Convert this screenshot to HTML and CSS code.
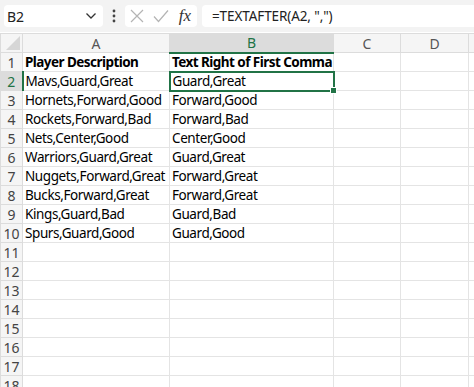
FILE: index.html
```html
<!DOCTYPE html>
<html lang="en">
<head>
  <meta charset="UTF-8" />
  <title>TEXTAFTER</title>
  <link rel="stylesheet" href="styles.css">
</head>
<body>
  <div class="toolbar">
    <div class="name-box">
      <span>B2</span>
      <svg class="chevron" width="12" height="8" viewBox="0 0 12 8"><path d="M1.5 1.5 L6 6 L10.5 1.5" fill="none" stroke="#333" stroke-width="1.3"/></svg>
    </div>
    <div class="grip">
      <svg width="4" height="14" viewBox="0 0 4 14"><circle cx="2" cy="2" r="1.4" fill="#444"/><circle cx="2" cy="7" r="1.4" fill="#444"/><circle cx="2" cy="12" r="1.4" fill="#444"/></svg>
    </div>
    <div class="fx-box">
      <svg width="14" height="14" viewBox="0 0 14 14"><path d="M1 1 L13 13 M13 1 L1 13" stroke="#b4b4b4" stroke-width="1.2"/></svg>
      <svg width="16" height="14" viewBox="0 0 16 14"><path d="M1 7.5 L5.5 12.5 L15 1.5" fill="none" stroke="#b4b4b4" stroke-width="1.2"/></svg>
      <span class="fx">fx</span>
    </div>
    <div class="formula">=TEXTAFTER(A2, ",")</div>
  </div>

  <table class="sheet">
    <colgroup>
      <col class="c-row"><col class="c-a"><col class="c-b"><col class="c-c"><col class="c-d"><col>
    </colgroup>
    <tr class="heads">
      <th class="corner"><span class="tri"></span></th>
      <th>A</th><th class="sel-col">B</th><th>C</th><th>D</th><th></th>
    </tr>
    <tr><th>1</th><td class="bold">Player Description</td><td class="bold">Text Right of First Comma</td><td></td><td></td><td></td></tr>
    <tr><th class="sel-row">2</th><td>Mavs,Guard,Great</td><td class="active">Guard,Great<span class="handle"></span></td><td></td><td></td><td></td></tr>
    <tr><th>3</th><td>Hornets,Forward,Good</td><td>Forward,Good</td><td></td><td></td><td></td></tr>
    <tr><th>4</th><td>Rockets,Forward,Bad</td><td>Forward,Bad</td><td></td><td></td><td></td></tr>
    <tr><th>5</th><td>Nets,Center,Good</td><td>Center,Good</td><td></td><td></td><td></td></tr>
    <tr><th>6</th><td>Warriors,Guard,Great</td><td>Guard,Great</td><td></td><td></td><td></td></tr>
    <tr><th>7</th><td>Nuggets,Forward,Great</td><td>Forward,Great</td><td></td><td></td><td></td></tr>
    <tr><th>8</th><td>Bucks,Forward,Great</td><td>Forward,Great</td><td></td><td></td><td></td></tr>
    <tr><th>9</th><td>Kings,Guard,Bad</td><td>Guard,Bad</td><td></td><td></td><td></td></tr>
    <tr><th>10</th><td>Spurs,Guard,Good</td><td>Guard,Good</td><td></td><td></td><td></td></tr>
    <tr><th>11</th><td></td><td></td><td></td><td></td><td></td></tr>
    <tr><th>12</th><td></td><td></td><td></td><td></td><td></td></tr>
    <tr><th>13</th><td></td><td></td><td></td><td></td><td></td></tr>
    <tr><th>14</th><td></td><td></td><td></td><td></td><td></td></tr>
    <tr><th>15</th><td></td><td></td><td></td><td></td><td></td></tr>
    <tr><th>16</th><td></td><td></td><td></td><td></td><td></td></tr>
    <tr><th>17</th><td></td><td></td><td></td><td></td><td></td></tr>
    <tr><th>18</th><td></td><td></td><td></td><td></td><td></td></tr>
  </table>
</body>
</html>
```

FILE: styles.css
```css
body {
  margin: 0;
  padding: 0;
  width: 474px;
  height: 387px;
  overflow: hidden;
  background: #fff;
  font-family: 'Noto Sans', sans-serif;
  color: #000;
}

.toolbar {
  height: 32px;
  background: #f3f3f3;
  display: flex;
  align-items: center;
  padding: 0 0 0 4px;
  box-sizing: border-box;
}

.name-box {
  width: 99px;
  height: 22px;
  background: #fff;
  border-radius: 4px;
  display: flex;
  align-items: center;
  justify-content: space-between;
  padding: 0 6px 0 3px;
  box-sizing: border-box;
  font-size: 14px;
  color: #222;
}

.grip {
  width: 22px;
  display: flex;
  justify-content: center;
  align-items: center;
}

.fx-box {
  width: 72px;
  height: 22px;
  background: #fff;
  border-radius: 4px;
  display: flex;
  align-items: center;
  justify-content: space-between;
  padding: 0 6px 0 5px;
  box-sizing: border-box;
}

.fx {
  font-family: 'Liberation Serif', serif;
  font-style: italic;
  font-size: 17px;
  color: #333;
}

.formula {
  flex: 1;
  height: 22px;
  margin-left: 5px;
  background: #fff;
  border-radius: 4px 0 0 4px;
  display: flex;
  align-items: center;
  padding-left: 10px;
  font-size: 13.5px;
  letter-spacing: -0.1px;
  color: #222;
}

.sheet {
  border-collapse: collapse;
  table-layout: fixed;
  width: 490px;
  margin-top: 1px;
}

.c-row { width: 22px; }
.c-a { width: 147px; }
.c-b { width: 164px; }
.c-c { width: 67px; }
.c-d { width: 68px; }

.sheet tr { height: 19px; }

.sheet td, .sheet th {
  border: 1px solid #e4e4e4;
  padding: 0 0 0 2px;
  font-size: 13.5px;
  letter-spacing: -0.4px;
  line-height: 17px;
  white-space: nowrap;
  overflow: visible;
  text-align: left;
  font-weight: normal;
}

.sheet th {
  background: #f5f5f5;
  color: #444;
  text-align: center;
  padding: 0;
  letter-spacing: 0;
  font-size: 14px;
  border-color: #dcdcdc;
}

.heads th {
  color: #555;
}

.sheet .bold {
  font-weight: bold;
  letter-spacing: -0.55px;
}

.corner {
  position: relative;
}

.tri {
  position: absolute;
  right: 2px;
  bottom: 2px;
  width: 0;
  height: 0;
  border-left: 14px solid transparent;
  border-bottom: 14px solid #d6d6d6;
}

.sheet .sel-col {
  background: #dcdcdc;
  color: #217346;
  border-bottom: 2px solid #217346;
}

.sheet .sel-row {
  background: #dcdcdc;
  color: #217346;
  border-right: 2px solid #217346;
}

.sheet .active {
  position: relative;
  border: 2px solid #217346;
}

.handle {
  position: absolute;
  right: -4px;
  bottom: -4px;
  width: 5px;
  height: 5px;
  background: #217346;
  border: 1px solid #fff;
}
```
